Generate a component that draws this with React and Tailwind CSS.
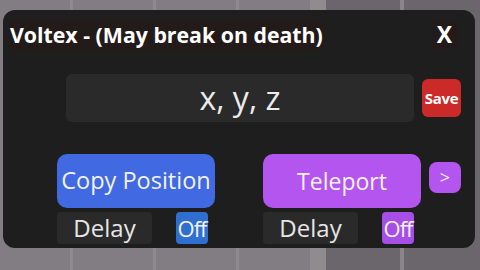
import React from "react";

const font = { fontFamily: '"Open Sans", "Noto Sans", sans-serif' };

function Backdrop() {
  // game world behind the window: grey wall with lighter seams
  return (
    <div className="absolute inset-0 bg-[#827d82]">
      <div className="absolute top-0 bottom-0 left-[70px] w-[3px] bg-[#8e898e]" />
      <div className="absolute top-0 bottom-0 left-[153px] w-[3px] bg-[#8e898e]" />
      <div className="absolute top-0 bottom-0 left-[236px] w-[3px] bg-[#8e898e]" />
      <div className="absolute top-0 bottom-0 left-[310px] w-[16px] bg-[#8f8b8f]" />
      <div className="absolute top-0 bottom-0 left-[326px] right-0 bg-[#6b666b]" />
      <div className="absolute top-0 bottom-0 left-[400px] w-[4px] bg-[#8a858a]" />
    </div>
  );
}

function Delay({ offCls }) {
  return (
    <div className="flex items-center mt-[4px]">
      <div className="w-[95px] h-[32px] rounded-[4px] bg-[#2a2a2a] text-[#e6e6e6] text-[24px] flex items-center justify-center">
        Delay
      </div>
      <div className={`ml-[24px] w-[32px] h-[32px] rounded-[4px] ${offCls} text-[#f2f2f2] text-[22px] flex items-center justify-center tracking-[-1px]`}>
        Off
      </div>
    </div>
  );
}

export default function App() {
  return (
    <div className="relative w-[480px] h-[270px] overflow-hidden" style={font}>
      <Backdrop />
      <div className="relative ml-[3px] mt-[10px] w-[472px] h-[238px] rounded-[12px] bg-[#1e1e1e] text-white">
        {/* title bar */}
        <div className="flex items-start pt-[10px] px-[7px]">
          <div className="h-[30px] w-[314px] bg-[#231a1a] flex items-center font-bold text-[21.3px] whitespace-nowrap">
            Voltex - (May break on death)
          </div>
          <div className="ml-auto mr-[10px] w-[27px] h-[29px] bg-[#231b1b] flex items-center justify-center font-bold text-[23px]">
            X
          </div>
        </div>

        {/* coordinates */}
        <div className="flex items-center mt-[24px] ml-[63px]">
          <div className="w-[348px] h-[48px] rounded-[6px] bg-[#2a2a2a] flex items-center justify-center text-[32px] text-[#ececec]">
            x, y, z
          </div>
          <button className="ml-[8px] w-[39px] h-[38px] rounded-[6px] bg-[#cc2929] text-white font-bold text-[15px] tracking-[-0.3px] flex items-center justify-center">
            Save
          </button>
        </div>

        {/* actions */}
        <div className="flex mt-[32px] ml-[54px]">
          <div className="flex flex-col">
            <button className="w-[158px] h-[54px] rounded-[10px] bg-[#4169e1] text-[#f2f2f2] text-[23.5px] whitespace-nowrap flex items-center justify-center">
              Copy Position
            </button>
            <Delay offCls="bg-[#2f6fcf]" />
          </div>
          <div className="flex flex-col ml-[48px]">
            <div className="flex items-start">
              <button className="w-[158px] h-[54px] rounded-[10px] bg-[#b455f0] text-[#f2f2f2] text-[23px] flex items-center justify-center">
                Teleport
              </button>
              <button className="ml-[8px] mt-[8px] w-[32px] h-[31px] rounded-[8px] bg-[#b455f0] text-[#f2f2f2] text-[18px] flex items-center justify-center">
                &gt;
              </button>
            </div>
            <Delay offCls="bg-[#a64ee6]" />
          </div>
        </div>
      </div>
    </div>
  );
}
